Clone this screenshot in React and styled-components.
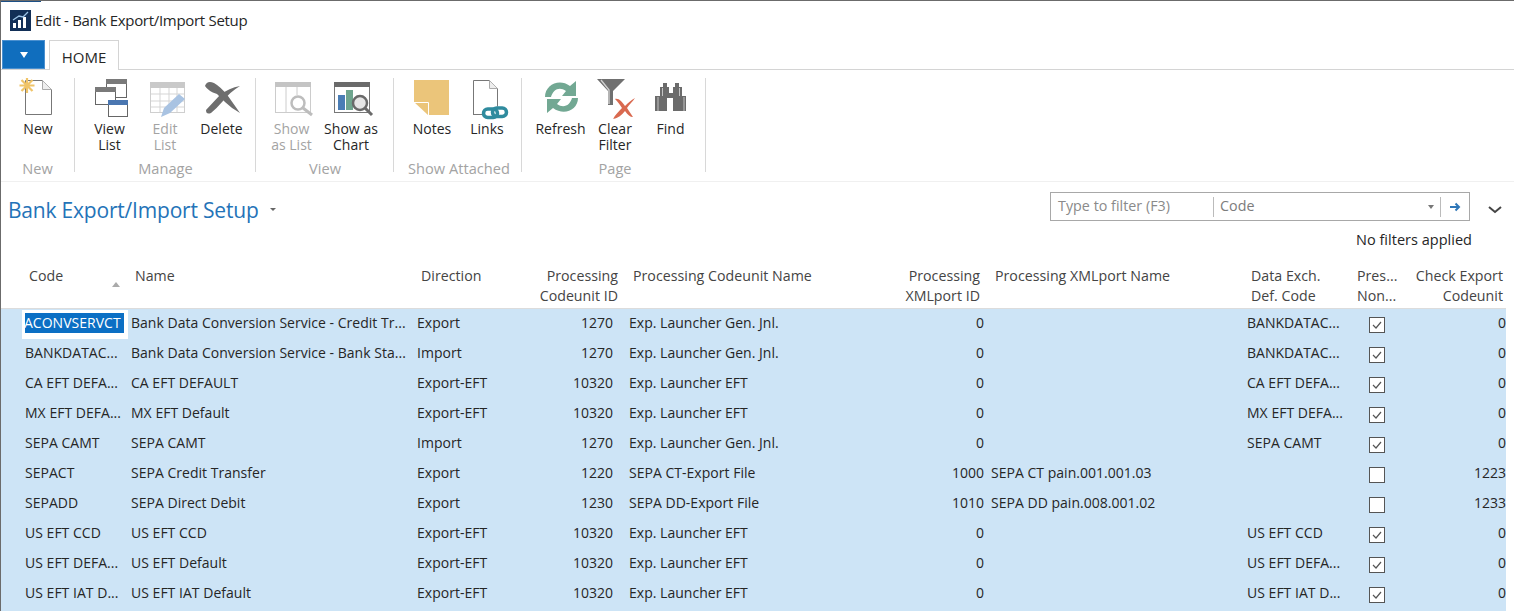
import React from 'react';
import styled, { createGlobalStyle } from 'styled-components';

const Global = createGlobalStyle`
  html, body { margin: 0; padding: 0; background: #fff; }
  body { font-family: "Open Sans", "Noto Sans", sans-serif; overflow: hidden; }
`;

const Page = styled.div`
  position: relative;
  width: 1514px;
  height: 611px;
  overflow: hidden;
  box-sizing: border-box;
  border-top: 1px solid #6b6b6b;
  border-left: 1px solid #6b6b6b;
  display: flex;
  flex-direction: column;
  color: #262626;
  font-size: 14px;
  letter-spacing: 0.02px;
  &::before {
    content: '';
    position: absolute;
    left: -1px;
    top: -1px;
    width: 41px;
    height: 2px;
    background: #1c4f86;
  }
`;

const TitleBar = styled.div`
  height: 38px;
  display: flex;
  align-items: center;
  gap: 4px;
  padding-left: 9px;
  font-size: 15px;
  letter-spacing: -0.3px;
  flex: none;
`;

const TabRow = styled.div`
  height: 30px;
  display: flex;
  align-items: flex-end;
  border-bottom: 1px solid #d4d4d4;
  flex: none;
`;

const MenuButton = styled.div`
  width: 43px;
  height: 29px;
  margin-left: 1px;
  background: #106ebe;
  border: 1px solid #4a90d0;
  box-sizing: border-box;
  display: flex;
  align-items: center;
  justify-content: center;
  &::after {
    content: '';
    border-left: 4px solid transparent;
    border-right: 4px solid transparent;
    border-top: 6px solid #fff;
  }
`;

const Tab = styled.div`
  margin-left: 4px;
  width: 70px;
  height: 30px;
  margin-bottom: -1px;
  box-sizing: border-box;
  background: #fff;
  border: 1px solid #d4d4d4;
  border-bottom: none;
  display: flex;
  align-items: center;
  justify-content: center;
  padding-top: 2px;
  font-size: 15px;
`;

const Ribbon = styled.div`
  height: 112px;
  flex: none;
  display: flex;
  padding-top: 8px;
  box-sizing: border-box;
  border-bottom: 1px solid #f0f0f0;
`;

const Group = styled.div`
  width: ${p => p.$w}px;
  height: 94px;
  box-sizing: border-box;
  border-right: 1px solid #d8d8d8;
  display: flex;
  flex-direction: column;
  justify-content: space-between;
`;

const GroupItems = styled.div`
  display: flex;
  padding-left: ${p => p.$pad || 0}px;
`;

const GroupLabel = styled.div`
  text-align: center;
  color: #a3a3a3;
  line-height: 18px;
  margin-bottom: -5px;
  font-size: 14.6px;
  padding-left: ${p => p.$shift || 0}px;
`;

const Action = styled.div`
  width: ${p => p.$w}px;
  display: flex;
  flex-direction: column;
  align-items: center;
  text-align: center;
  line-height: 16px;
  color: ${p => (p.$off ? '#a3a3a3' : '#262626')};
  svg { display: block; width: 38px; height: 38px; margin-bottom: 5px; flex: none; overflow: visible; }
`;

const PageHead = styled.div`
  height: 59px;
  flex: none;
  box-sizing: border-box;
  display: flex;
  align-items: flex-start;
  padding: 10px 12px 0 7px;
`;

const PageTitle = styled.div`
  color: #2473b8;
  font-size: 21px;
  line-height: 29px;
  letter-spacing: -0.2px;
  margin-top: 4px;
`;

const TitleCaret = styled.span`
  width: 0;
  height: 0;
  margin: 16px 0 0 11px;
  border-left: 3px solid transparent;
  border-right: 3px solid transparent;
  border-top: 3px solid #666;
`;

const FilterBox = styled.div`
  margin-left: auto;
  width: 420px;
  height: 29px;
  box-sizing: border-box;
  border: 1px solid #a8a8a8;
  display: flex;
  align-items: center;
  color: #8a8a8a;
  font-size: 14.3px;
`;

const FilterHint = styled.div`
  width: 163px;
  padding-left: 7px;
  box-sizing: border-box;
  border-right: 1px solid #bbb;
  height: 20px;
  line-height: 17px;
`;

const FilterField = styled.div`
  flex: 1;
  height: 20px;
  line-height: 17px;
  padding-left: 6px;
  color: #7c7c7c;
  display: flex;
  align-items: flex-start;
  justify-content: space-between;
  padding-right: 6px;
  &::after {
    content: '';
    margin-top: 8px;
    border-left: 3px solid transparent;
    border-right: 3px solid transparent;
    border-top: 4px solid #777;
  }
`;

const FilterGo = styled.div`
  width: 28px;
  height: 20px;
  border-left: 1px solid #bbb;
  display: flex;
  align-items: center;
  justify-content: center;
  svg { width: 12px; height: 10px; }
`;

const Expand = styled.svg`
  width: 14px;
  height: 8px;
  margin-left: 18px;
  margin-top: 14px;
`;

const FilterNote = styled.div`
  height: 20px;
  flex: none;
  text-align: right;
  padding-right: 42px;
  line-height: 20px;
  margin-top: -11px;
  font-size: 14.5px;
`;

const columns = '130px 286px 90px 112px 248px 117px 255px 110px 62px 1fr';

const HeaderRow = styled.div`
  display: grid;
  grid-template-columns: ${columns};
  width: 1505px;
  height: 42px;
  flex: none;
  margin-top: 16px;
  line-height: 20px;
  color: #444;
  font-size: 14.2px;
  border-bottom: 1px solid #dcdcdc;
`;

const HeadCell = styled.div`
  position: relative;
  padding-left: ${p => p.$pl || 0}px;
  padding-right: ${p => p.$pr || 0}px;
  text-align: ${p => (p.$right ? 'right' : 'left')};
  white-space: nowrap;
`;

const SortMark = styled.span`
  position: absolute;
  left: 111px;
  top: 16px;
  border-left: 4.5px solid transparent;
  border-right: 4.5px solid transparent;
  border-bottom: 5px solid #aaa;
`;

const Body = styled.div`
  width: 1505px;
  flex: 1;
  background: #cde4f6;
`;

const Row = styled.div`
  display: grid;
  grid-template-columns: ${columns};
  height: 30px;
  align-items: center;
  overflow: hidden;
`;

const Cell = styled.div`
  padding-left: ${p => p.$pl || 0}px;
  padding-right: ${p => p.$pr || 0}px;
  padding-bottom: 3px;
  text-align: ${p => (p.$right ? 'right' : 'left')};
  white-space: nowrap;
  overflow: hidden;
`;

const CurrentCell = styled.div`
  margin: 1px 0 0 21px;
  width: 106px;
  height: 29px;
  box-sizing: border-box;
  background: #fff;
  padding: 3px 4px 0 3px;
  line-height: 20px;
  overflow: hidden;
  white-space: nowrap;
  span { display: block; overflow: hidden; background: #0b6fc4; color: #fff; text-indent: -1px; }
`;

const Check = styled.div`
  width: 16px;
  height: 16px;
  margin: 2px 0 0 20px;
  box-sizing: border-box;
  border: 1px solid #555;
  background: #fff;
  display: flex;
  svg { width: 14px; height: 14px; }
`;

const icons = {
  new: (
    <svg viewBox="0 0 38 38">
      <path d="M6.5 2.5h17l9 9v25h-26z" fill="#fff" stroke="#777" />
      <path d="M23.5 2.5v9h9" fill="#eee" stroke="#aaa" />
      <g stroke="#f0c468" strokeWidth="2.2">
        <path d="M8 0v15M0.5 7.5h15M2.5 2l11 11M13.5 2l-11 11" />
      </g>
    </svg>
  ),
  viewList: (
    <svg viewBox="0 0 38 38">
      <rect x="15.5" y="1.5" width="20" height="18" fill="#fff" stroke="#666" />
      <rect x="15" y="1" width="21" height="5" fill="#7a7a7a" />
      <rect x="4.5" y="9.5" width="20" height="17" fill="#fff" stroke="#666" />
      <rect x="4" y="9" width="21" height="5" fill="#7a7a7a" />
      <rect x="17.5" y="22.5" width="19" height="16" fill="#fff" stroke="#666" />
      <rect x="17" y="22" width="20" height="5" fill="#4a76b0" />
    </svg>
  ),
  editList: (
    <svg viewBox="0 0 38 38">
      <rect x="4.5" y="4.5" width="34" height="30" fill="#fff" stroke="#cfcfcf" />
      <rect x="4" y="4" width="35" height="6" fill="#c9c9c9" />
      <path d="M5 16h33M5 23h33M5 29h33M14 10v24M23 10v24M31 10v24" stroke="#d5d5d5" />
      <path d="M15 39l3-9 15-14 6 5-15 14z" fill="#a9c3e2" />
    </svg>
  ),
  del: (
    <svg viewBox="0 0 38 38">
      <path d="M2 8Q4 2 11 5Q18 9 25 18L37 35Q28 30 22 24L14 16Q5 13 2 8z" fill="#6e6e6e" />
      <path d="M37 8Q26 10 17 17L3 32Q3 37 8 35Q14 30 20 23Q27 14 37 8z" fill="#6e6e6e" />
    </svg>
  ),
  showList: (
    <svg viewBox="0 0 38 38">
      <rect x="2.5" y="4.5" width="35" height="30" fill="#fff" stroke="#ccc" />
      <rect x="2" y="4" width="36" height="5" fill="#c4c4c4" />
      <path d="M13 9v26M24 9v8" stroke="#ccc" />
      <circle cx="25" cy="25" r="6.5" fill="#fff" stroke="#bdbdbd" strokeWidth="2.5" />
      <path d="M30 30l9 7" stroke="#bdbdbd" strokeWidth="3" />
    </svg>
  ),
  showChart: (
    <svg viewBox="0 0 38 38">
      <rect x="2.5" y="4.5" width="35" height="30" fill="#fff" stroke="#777" />
      <rect x="2" y="4" width="36" height="5" fill="#6a6a6a" />
      <rect x="6" y="17" width="7" height="15" fill="#4a7db5" />
      <rect x="14" y="12" width="7" height="20" fill="#6fa58e" />
      <circle cx="28" cy="25" r="7" fill="#e6e6e6" stroke="#6a6a6a" strokeWidth="2.5" />
      <path d="M33 30l7 7" stroke="#6a6a6a" strokeWidth="3" />
    </svg>
  ),
  notes: (
    <svg viewBox="0 0 38 38">
      <path d="M1 2h35v35H15L1 24z" fill="#ebc57a" />
      <path d="M1 24.5h14.5V37" fill="none" stroke="#fff" />
    </svg>
  ),
  links: (
    <svg viewBox="0 0 38 38">
      <path d="M5.5 37V2.500h16l8 8v18" fill="#fff" stroke="#777" />
      <path d="M21.5 2.500v8h8" fill="#eee" stroke="#aaa" />
      <path d="M5 36.5h10" stroke="#777" />
      <g fill="none" stroke="#2f8b9e" strokeWidth="3.5">
        <rect x="15.5" y="31" width="14" height="8.5" rx="4.2" />
        <rect x="24.5" y="30" width="14" height="8.5" rx="4.2" />
      </g>
    </svg>
  ),
  refresh: (
    <svg viewBox="0 0 38 38">
      <path d="M3 19C3 7 17 0 28 8l6-5v15H20l4-5c-7-5-13-1-15 6z" fill="#72a893" />
      <path d="M36 20C36 32 22 38 11 30l-6 5V21h14l-4 5c7 5 13 1 15-6z" fill="#72a893" />
    </svg>
  ),
  clearFilter: (
    <svg viewBox="0 0 38 38">
      <path d="M1 1h28L17 13v14h-5V13z" fill="#707070" />
      <path d="M5 2l8 10v14" fill="none" stroke="#d0d0d0" strokeWidth="1.4" />
      <path d="M19 21c4-1 7 3 10 7 3-3 6-6 10-8-2 3-6 7-8 10 2 3 4 6 6 9-3 0-5-2-8-6-3 4-7 7-12 8 2-4 6-8 9-11-2-3-4-6-7-9z" fill="#d9694f" />
    </svg>
  ),
  find: (
    <svg viewBox="0 0 38 38">
      <path d="M11 5h4v4h2v6h4V9h2V5h4v4h3v9h4v15H21V20h-6v13H3V18h5V9h3z" fill="#6b6b6b" />
      <path d="M6 19v14M10.5 10v8M27.5 10v8M32 19v14" stroke="#c4c4c4" />
    </svg>
  ),
};

const groups = [
  { label: 'New', w: 74, pad: 7, items: [{ id: 'new', lines: ['New'], w: 60 }] },
  { label: 'Manage', w: 181, pad: 7, shift: 1, items: [
    { id: 'viewList', lines: ['View', 'List'], w: 55 },
    { id: 'editList', lines: ['Edit', 'List'], w: 56, off: true },
    { id: 'del', lines: ['Delete'], w: 57 },
  ] },
  { label: 'View', w: 138, pad: 9, shift: 1, items: [
    { id: 'showList', lines: ['Show', 'as List'], w: 53, off: true },
    { id: 'showChart', lines: ['Show as', 'Chart'], w: 66 },
  ] },
  { label: 'Show Attached', w: 128, pad: 8, shift: 3, items: [
    { id: 'notes', lines: ['Notes'], w: 60 },
    { id: 'links', lines: ['Links'], w: 50 },
  ] },
  { label: 'Page', w: 184, pad: 10, shift: 3, items: [
    { id: 'refresh', lines: ['Refresh'], w: 57 },
    { id: 'clearFilter', lines: ['Clear', 'Filter'], w: 52 },
    { id: 'find', lines: ['Find'], w: 59 },
  ] },
];

const rows = [
  ['ACONVSERVCT', 'Bank Data Conversion Service - Credit Tr...', 'Export', '1270', 'Exp. Launcher Gen. Jnl.', '0', '', 'BANKDATAC...', true, '0'],
  ['BANKDATAC...', 'Bank Data Conversion Service - Bank Sta...', 'Import', '1270', 'Exp. Launcher Gen. Jnl.', '0', '', 'BANKDATAC...', true, '0'],
  ['CA EFT DEFA...', 'CA EFT DEFAULT', 'Export-EFT', '10320', 'Exp. Launcher EFT', '0', '', 'CA EFT DEFA...', true, '0'],
  ['MX EFT DEFA...', 'MX EFT Default', 'Export-EFT', '10320', 'Exp. Launcher EFT', '0', '', 'MX EFT DEFA...', true, '0'],
  ['SEPA CAMT', 'SEPA CAMT', 'Import', '1270', 'Exp. Launcher Gen. Jnl.', '0', '', 'SEPA CAMT', true, '0'],
  ['SEPACT', 'SEPA Credit Transfer', 'Export', '1220', 'SEPA CT-Export File', '1000', 'SEPA CT pain.001.001.03', '', false, '1223'],
  ['SEPADD', 'SEPA Direct Debit', 'Export', '1230', 'SEPA DD-Export File', '1010', 'SEPA DD pain.008.001.02', '', false, '1233'],
  ['US EFT CCD', 'US EFT CCD', 'Export-EFT', '10320', 'Exp. Launcher EFT', '0', '', 'US EFT CCD', true, '0'],
  ['US EFT DEFA...', 'US EFT Default', 'Export-EFT', '10320', 'Exp. Launcher EFT', '0', '', 'US EFT DEFA...', true, '0'],
  ['US EFT IAT D...', 'US EFT IAT Default', 'Export-EFT', '10320', 'Exp. Launcher EFT', '0', '', 'US EFT IAT D...', true, '0'],
];

export default function App() {
  return (
    <Page>
      <Global />
      <TitleBar>
        <svg width="21" height="21" viewBox="0 0 21 21">
          <rect width="21" height="21" fill="#122f57" />
          <path d="M3 18v-5h3v5zM8 18V10h3v8zM13 18V7h3v11z" fill="#fff" />
          <path d="M3 10l6-4 4 1 5-5" fill="none" stroke="#9cc3e6" strokeWidth="1.3" />
        </svg>
        Edit - Bank Export/Import Setup
      </TitleBar>
      <TabRow>
        <MenuButton />
        <Tab>HOME</Tab>
      </TabRow>
      <Ribbon>
        {groups.map(g => (
          <Group key={g.label} $w={g.w}>
            <GroupItems $pad={g.pad}>
              {g.items.map(a => (
                <Action key={a.id} $w={a.w} $off={a.off}>
                  {icons[a.id]}
                  {a.lines.map(l => <div key={l}>{l}</div>)}
                </Action>
              ))}
            </GroupItems>
            <GroupLabel $shift={g.shift}>{g.label}</GroupLabel>
          </Group>
        ))}
      </Ribbon>
      <PageHead>
        <PageTitle>Bank Export/Import Setup</PageTitle>
        <TitleCaret />
        <FilterBox>
          <FilterHint>Type to filter (F3)</FilterHint>
          <FilterField>Code</FilterField>
          <FilterGo>
            <svg viewBox="0 0 12 10"><path d="M1 5h9M6.5 1.5L10 5 6.5 8.5" fill="none" stroke="#2f77b8" strokeWidth="2" /></svg>
          </FilterGo>
        </FilterBox>
        <Expand viewBox="0 0 14 8"><path d="M1 1l6 5 6-5" fill="none" stroke="#444" strokeWidth="2" /></Expand>
      </PageHead>
      <FilterNote>No filters applied</FilterNote>
      <HeaderRow>
        <HeadCell $pl={28}>Code<SortMark /></HeadCell>
        <HeadCell $pl={4}>Name</HeadCell>
        <HeadCell $pl={4}>Direction</HeadCell>
        <HeadCell $right $pr={1}>Processing<br />Codeunit ID</HeadCell>
        <HeadCell $pl={14}>Processing Codeunit Name</HeadCell>
        <HeadCell $right $pr={4}>Processing<br />XMLport ID</HeadCell>
        <HeadCell $pl={11}>Processing XMLport Name</HeadCell>
        <HeadCell $pl={12}>Data Exch.<br />Def. Code</HeadCell>
        <HeadCell $pl={8}>Pres...<br />Non...</HeadCell>
        <HeadCell $right $pr={3}>Check Export<br />Codeunit</HeadCell>
      </HeaderRow>
      <Body>
        {rows.map((r, i) => (
          <Row key={r[0]}>
            {i === 0 ? <CurrentCell><span>{r[0]}</span></CurrentCell> : <Cell $pl={24}>{r[0]}</Cell>}
            <Cell>{r[1]}</Cell>
            <Cell>{r[2]}</Cell>
            <Cell $right $pr={6}>{r[3]}</Cell>
            <Cell $pl={10}>{r[4]}</Cell>
            <Cell $right>{r[5]}</Cell>
            <Cell $pl={7}>{r[6]}</Cell>
            <Cell $pl={8}>{r[7]}</Cell>
            <Check>
              {r[8] && <svg viewBox="0 0 14 14"><path d="M3 7l3 3 5-6" fill="none" stroke="#555" strokeWidth="1.2" /></svg>}
            </Check>
            <Cell $right>{r[9]}</Cell>
          </Row>
        ))}
      </Body>
    </Page>
  );
}
